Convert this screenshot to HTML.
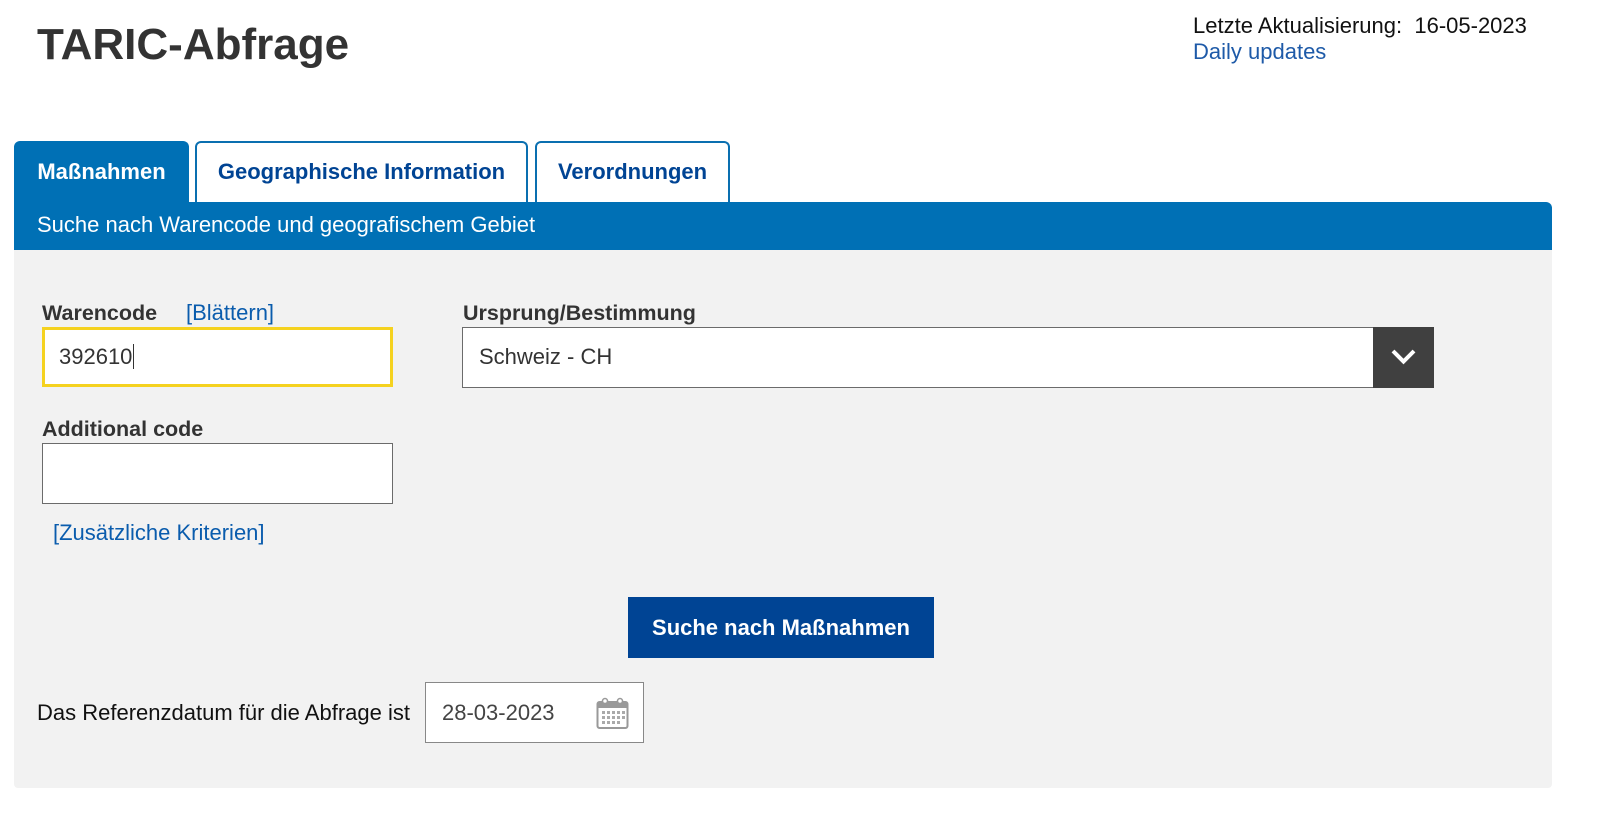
<!DOCTYPE html>
<html><head><meta charset="utf-8"><style>
body{margin:0;width:1600px;height:818px;background:#fff;font-family:"Liberation Sans",Arial,sans-serif;position:relative;overflow:hidden}
.a{position:absolute;white-space:nowrap}
.tab{position:absolute;top:141px;height:61px;box-sizing:border-box;border:2px solid #0a6fb0;border-bottom:none;border-radius:6px 6px 0 0;background:#fff;color:#004494;font-weight:bold;font-size:22px;line-height:58px;text-align:center}
.lbl{font-weight:bold;font-size:21.5px;color:#333}
.lnk{color:#0a5cad;font-size:22px}
.inp{position:absolute;box-sizing:border-box;background:#fff;border:1.5px solid #6b6b6b}
</style></head><body>
<div class="a" style="left:37px;top:20px;font-size:44px;font-weight:bold;color:#333">TARIC-Abfrage</div>
<div class="a" style="left:1193px;top:13px;font-size:22px;color:#111">Letzte Aktualisierung:&nbsp; 16-05-2023</div>
<div class="a" style="left:1193px;top:39px;font-size:22px;color:#1e5aa8">Daily updates</div>

<div class="tab" style="left:14px;width:175px;background:#0070b5;color:#fff;border-color:#0070b5">Maßnahmen</div>
<div class="tab" style="left:195px;width:333px">Geographische Information</div>
<div class="tab" style="left:535px;width:195px">Verordnungen</div>
<div class="a" style="left:14px;top:202px;width:1538px;height:48px;background:#0070b5;border-radius:0 6px 0 0"></div>
<div class="a" style="left:37px;top:212px;font-size:22px;color:#fff">Suche nach Warencode und geografischem Gebiet</div>
<div class="a" style="left:14px;top:250px;width:1538px;height:538px;background:#f2f2f2;border-radius:0 0 4px 4px"></div>

<div class="a lbl" style="left:42px;top:301px">Warencode</div>
<div class="a lnk" style="left:186px;top:300px">[Blättern]</div>
<div class="inp" style="left:42px;top:327px;width:351px;height:60px;border:3px solid #f5d21f"></div>
<div class="a" style="left:59px;top:344px;font-size:22px;color:#333">392610<span style="border-left:1px solid #333;margin-left:1px"></span></div>

<div class="a lbl" style="left:463px;top:301px">Ursprung/Bestimmung</div>
<div class="inp" style="left:462px;top:327px;width:972px;height:61px"></div>
<div class="a" style="left:479px;top:344px;font-size:22px;color:#333">Schweiz - CH</div>
<div class="a" style="left:1373px;top:327px;width:61px;height:61px;background:#404040">
<svg width="61" height="61" viewBox="0 0 61 61"><path d="M20 24 L30.5 34.5 L41 24" fill="none" stroke="#fff" stroke-width="4"/></svg></div>

<div class="a lbl" style="left:42px;top:417px">Additional code</div>
<div class="inp" style="left:42px;top:443px;width:351px;height:61px"></div>
<div class="a lnk" style="left:53px;top:520px">[Zusätzliche Kriterien]</div>

<div class="a" style="left:628px;top:597px;width:306px;height:61px;background:#004494;color:#fff;font-weight:bold;font-size:22px;line-height:61px;text-align:center">Suche nach Maßnahmen</div>

<div class="a" style="left:37px;top:700px;font-size:22px;color:#111">Das Referenzdatum für die Abfrage ist</div>
<div class="inp" style="left:425px;top:682px;width:219px;height:61px;border-color:#888"></div>
<div class="a" style="left:442px;top:700px;font-size:22px;color:#444">28-03-2023</div>
<svg class="a" style="left:596px;top:697px" width="33" height="33" viewBox="0 0 33 33">
<rect x="1.5" y="5" width="30" height="26" rx="2" fill="#fff" stroke="#999" stroke-width="2"/>
<rect x="1.5" y="5" width="30" height="6" fill="#999"/>
<circle cx="9" cy="4" r="2.5" fill="#fff" stroke="#999" stroke-width="1.5"/>
<circle cx="24" cy="4" r="2.5" fill="#fff" stroke="#999" stroke-width="1.5"/>
<g fill="#aaa"><rect x="6" y="14" width="3" height="3"/><rect x="11" y="14" width="3" height="3"/><rect x="16" y="14" width="3" height="3"/><rect x="21" y="14" width="3" height="3"/><rect x="26" y="14" width="3" height="3"/>
<rect x="6" y="19" width="3" height="3"/><rect x="11" y="19" width="3" height="3"/><rect x="16" y="19" width="3" height="3"/><rect x="21" y="19" width="3" height="3"/><rect x="26" y="19" width="3" height="3"/>
<rect x="6" y="24" width="3" height="3"/><rect x="11" y="24" width="3" height="3"/><rect x="16" y="24" width="3" height="3"/><rect x="21" y="24" width="3" height="3"/></g>
</svg>
</body></html>
